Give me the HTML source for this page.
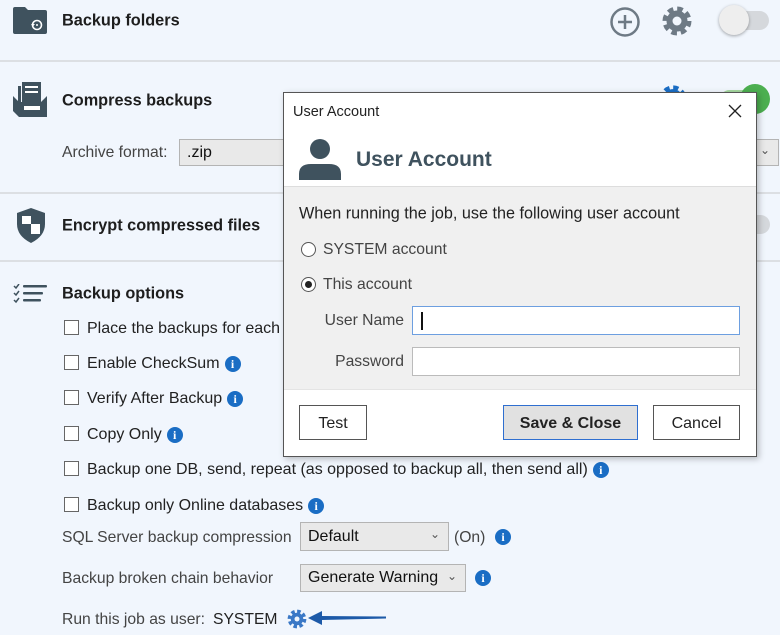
<!DOCTYPE html>
<html><head><meta charset="utf-8"><style>
*{box-sizing:border-box;margin:0;padding:0}
body{width:780px;height:635px;background:#f1f6fd;font-family:"Liberation Sans","DejaVu Sans",sans-serif;color:#222;position:relative;overflow:hidden;font-size:16px}
.a{position:absolute;white-space:nowrap}
.h{font-size:16.3px;font-weight:bold;color:#1e1e1e;transform:translateY(-50%)}
.t{transform:translateY(-50%);color:#222}
.g{color:#444;font-size:15.7px}
.sep{position:absolute;left:0;width:780px;height:2px;background:#dcdfe3}
.cb{position:absolute;width:15px;height:15px;border:1px solid #666;background:#fff}
.info{display:inline-block;width:16px;height:16px;border-radius:50%;background:#1a6dc4;color:#fff;font-weight:bold;font-size:12px;text-align:center;line-height:16px;font-family:"Liberation Serif",serif;vertical-align:middle;margin-left:5px}
.sel{position:absolute;background:#e9e9e9;border:1px solid #b4b4b4;padding-left:7px;font-size:16px;color:#111}
.sel:after{content:"⌄";position:absolute;right:8px;top:-2px;font-size:12px;color:#555}
.btn{position:absolute;border:1px solid #555;background:#fff;text-align:center;font-size:16px;line-height:35px}
</style></head><body>

<svg class="a" style="left:13px;top:7px" width="34" height="27" viewBox="0 0 34 27"><path d="M0 2Q0 0 2 0H12L15 3H32Q34 3 34 5V25Q34 27 32 27H2Q0 27 0 25Z" fill="#3f525e"/><circle cx="24" cy="18" r="4.5" fill="none" stroke="#fff" stroke-width="1.6"/><path d="M18 17l2 2.5 2-2.5" fill="#fff"/><circle cx="24" cy="18" r="1" fill="#fff"/></svg>
<div class="a h" style="left:62px;top:21px">Backup folders</div>
<svg class="a" style="left:609px;top:6px" width="32" height="32" viewBox="0 0 32 32"><circle cx="16" cy="16" r="13.5" fill="none" stroke="#6e7a85" stroke-width="2.5"/><path d="M16 9v14M9 16h14" stroke="#6e7a85" stroke-width="2.5"/></svg>
<svg class="a" style="left:661px;top:5px" width="32" height="32" viewBox="0 0 32 32"><circle cx="16" cy="16" r="12" fill="none" stroke="#6e7a85" stroke-width="5" stroke-dasharray="5.5 3.9"/><circle cx="16" cy="16" r="10.5" fill="#6e7a85"/><circle cx="16" cy="16" r="4.5" fill="#f1f6fd"/></svg>
<div class="a" style="left:724px;top:11px;width:45px;height:19px;border-radius:10px;background:#d5d8dc"></div>
<div class="a" style="left:719px;top:5px;width:30px;height:30px;border-radius:50%;background:#eee;box-shadow:0 1px 3px rgba(0,0,0,.35)"></div>
<div class="sep" style="top:60px"></div>

<svg class="a" style="left:13px;top:82px" width="34" height="35" viewBox="0 0 34 35"><rect x="9" y="0" width="19" height="20" fill="#3f525e"/><rect x="12" y="4" width="13" height="2" fill="#fff"/><rect x="12" y="9" width="13" height="2" fill="#fff"/><rect x="5" y="4" width="3" height="18" fill="#3f525e"/><path d="M0 14l6 6h22l6-6v21H6L0 29Z" fill="#3f525e"/><rect x="11" y="24" width="16" height="4" fill="#fff"/></svg>
<div class="a h" style="left:62px;top:101px">Compress backups</div>
<svg class="a" style="left:658px;top:84px" width="30" height="30" viewBox="0 0 32 32"><circle cx="16" cy="16" r="12" fill="none" stroke="#1a6dc4" stroke-width="5" stroke-dasharray="5.5 3.9"/><circle cx="16" cy="16" r="10.5" fill="#1a6dc4"/></svg>
<div class="a" style="left:720px;top:90px;width:45px;height:19px;border-radius:10px;background:#a5d8a0"></div>
<div class="a" style="left:740px;top:84px;width:30px;height:30px;border-radius:50%;background:#4caf50"></div>
<div class="a t g" style="left:62px;top:153px">Archive format:</div>
<div class="sel" style="left:179px;top:139px;width:600px;height:27px;line-height:25px">.zip</div>
<div class="sep" style="top:192px"></div>

<svg class="a" style="left:17px;top:208px" width="28" height="35" viewBox="0 0 28 35"><path d="M14 0L28 5V16Q28 28 14 35Q0 28 0 16V5Z" fill="#3f525e"/><rect x="14" y="16" width="9" height="10" fill="#fff"/><rect x="5" y="8" width="9" height="8" fill="#fff"/></svg>
<div class="a h" style="left:62px;top:226px">Encrypt compressed files</div>
<div class="a" style="left:745px;top:215px;width:25px;height:19px;border-radius:10px;background:#d5d8dc"></div>
<div class="sep" style="top:260px"></div>

<svg class="a" style="left:13px;top:284px" width="34" height="20" viewBox="0 0 34 20"><path d="M1 2l2 2 3-4M1 9l2 2 3-4M1 16l2 2 3-4" stroke="#3f525e" stroke-width="1.5" fill="none"/><rect x="10" y="1" width="24" height="2.5" rx="1" fill="#3f525e"/><rect x="10" y="8" width="20" height="2.5" rx="1" fill="#3f525e"/><rect x="10" y="15" width="18" height="2.5" rx="1" fill="#3f525e"/></svg>
<div class="a h" style="left:62px;top:294px">Backup options</div>

<div class="cb" style="left:64px;top:320px"></div><div class="a t" style="left:87px;top:329px">Place the backups for each</div>
<div class="cb" style="left:64px;top:355px"></div><div class="a t" style="left:87px;top:364px">Enable CheckSum<span class="info">i</span></div>
<div class="cb" style="left:64px;top:390px"></div><div class="a t" style="left:87px;top:399px">Verify After Backup<span class="info">i</span></div>
<div class="cb" style="left:64px;top:426px"></div><div class="a t" style="left:87px;top:435px">Copy Only<span class="info">i</span></div>
<div class="cb" style="left:64px;top:461px"></div><div class="a t" style="left:87px;top:470px">Backup one DB, send, repeat (as opposed to backup all, then send all)<span class="info">i</span></div>
<div class="cb" style="left:64px;top:497px"></div><div class="a t" style="left:87px;top:506px">Backup only Online databases<span class="info">i</span></div>

<div class="a t g" style="left:62px;top:538px">SQL Server backup compression</div>
<div class="sel" style="left:300px;top:522px;width:149px;height:29px;line-height:27px">Default</div>
<div class="a t g" style="left:454px;top:538px">(On)</div>
<div class="a t" style="left:490px;top:537px"><span class="info">i</span></div>
<div class="a t g" style="left:62px;top:579px">Backup broken chain behavior</div>
<div class="sel" style="left:300px;top:564px;width:166px;height:28px;line-height:26px">Generate Warning</div>
<div class="a t" style="left:470px;top:578px"><span class="info">i</span></div>
<div class="a t g" style="left:62px;top:620px">Run this job as user:</div>
<div class="a t" style="left:213px;top:620px;font-size:15.7px">SYSTEM</div>
<svg class="a" style="left:287px;top:609px" width="20" height="20" viewBox="0 0 32 32"><circle cx="16" cy="16" r="12" fill="none" stroke="#3a78c6" stroke-width="6" stroke-dasharray="5.5 3.9"/><circle cx="16" cy="16" r="10" fill="#3a78c6"/><circle cx="16" cy="16" r="4" fill="#f1f6fd"/></svg>
<svg class="a" style="left:306px;top:610px" width="82" height="16" viewBox="0 0 82 16"><path d="M2 8L16 1V6L80 6.5V8.5L16 10V15Z" fill="#1d5aa8"/></svg>

<div class="a" style="left:283px;top:92px;width:474px;height:365px;background:#fff;border:1px solid #555;box-shadow:2px 2px 6px rgba(0,0,0,.25)">
 <div class="a" style="left:9px;top:19px;font-size:14.5px;transform:translateY(-50%)">User Account</div>
 <svg class="a" style="left:444px;top:11px" width="14" height="14" viewBox="0 0 14 14"><path d="M1 1L13 13M13 1L1 13" stroke="#222" stroke-width="1.3"/></svg>
 <svg class="a" style="left:15px;top:45px" width="42" height="42" viewBox="0 0 42 42"><circle cx="21" cy="11" r="10" fill="#3f525e"/><path d="M0 42V36Q0 26 12 26H30Q42 26 42 36V42Z" fill="#3f525e"/></svg>
 <div class="a" style="left:72px;top:67px;font-size:21px;font-weight:bold;color:#3f525e;transform:translateY(-50%)">User Account</div>
 <div class="a" style="left:0;top:93px;width:472px;height:204px;background:#f0f0f0;border-top:1px solid #ddd;border-bottom:1px solid #e4e4e4">
  <div class="a t" style="left:15px;top:27px;font-size:16.2px">When running the job, use the following user account</div>
  <div class="a" style="left:17px;top:55px;width:15px;height:15px;border:1px solid #555;border-radius:50%;background:#fff"></div>
  <div class="a t g" style="left:39px;top:63px">SYSTEM account</div>
  <div class="a" style="left:17px;top:90px;width:15px;height:15px;border:1px solid #555;border-radius:50%;background:#fff"></div>
  <div class="a" style="left:21px;top:94px;width:7px;height:7px;border-radius:50%;background:#222"></div>
  <div class="a t g" style="left:39px;top:98px">This account</div>
  <div class="a t g" style="right:352px;top:134px">User Name</div>
  <div class="a" style="left:128px;top:119px;width:328px;height:29px;background:#fff;border:1px solid #6d9fe0"><div class="a" style="left:8px;top:5px;width:2px;height:18px;background:#111"></div></div>
  <div class="a t g" style="right:352px;top:175px">Password</div>
  <div class="a" style="left:128px;top:160px;width:328px;height:29px;background:#fff;border:1px solid #bbb"></div>
 </div>
 <div class="btn" style="left:15px;top:312px;width:68px;height:35px">Test</div>
 <div class="btn" style="left:219px;top:312px;width:135px;height:35px;background:#e1e1e1;border-color:#2f6fd0;font-weight:bold">Save &amp; Close</div>
 <div class="btn" style="left:369px;top:312px;width:87px;height:35px">Cancel</div>
</div>
</body></html>
